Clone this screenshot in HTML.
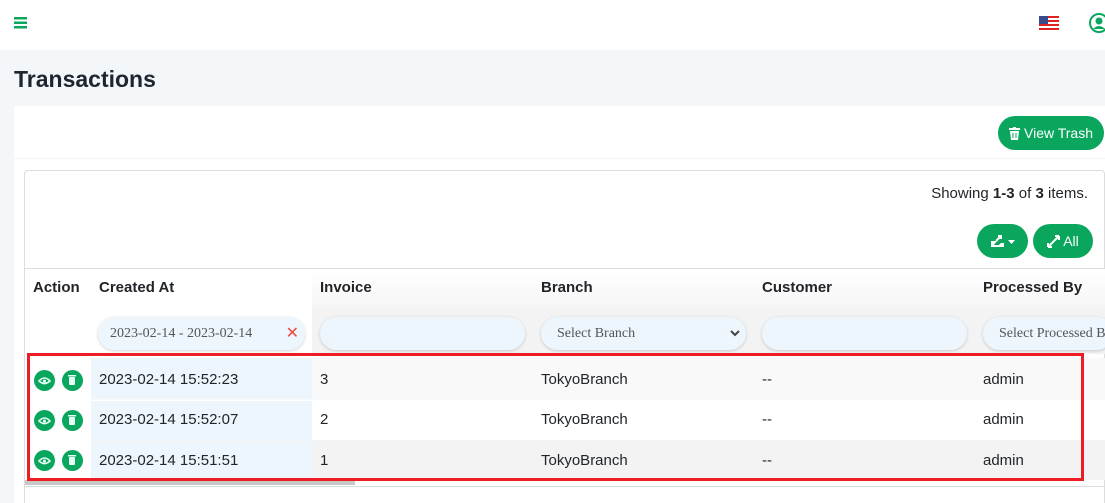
<!DOCTYPE html>
<html><head><meta charset="utf-8"><style>
*{box-sizing:border-box;margin:0;padding:0}
html,body{width:1105px;height:503px;overflow:hidden}
body{background:#f4f7fa;font-family:"Liberation Sans","DejaVu Sans",sans-serif;color:#212529;position:relative;font-size:15px}
.abs{position:absolute}
.top{left:0;top:0;width:1105px;height:50px;background:#fff}
.g{background:#0aa65e;color:#fff}
h1{position:absolute;left:14px;top:66px;font-size:23px;font-weight:bold;color:#1e2530}
.card{left:14px;top:106px;width:1091px;height:397px;background:#fff}
.panel{left:24px;top:170px;width:1081px;height:340px;border:1px solid #ddd;border-radius:4px;background:#fff}
.btn{border-radius:17px;color:#fff;font-size:14px;display:flex;align-items:center;justify-content:center}
.th{font-weight:bold;font-size:15px;top:279px}
.cell{font-size:15px}
.inp{height:33px;border-radius:17px;background:#eef6fd;box-shadow:0 1px 3px rgba(0,0,0,.18);font-family:"Liberation Serif",serif;font-size:14px;color:#555;padding-left:12px;line-height:33px;overflow:hidden;white-space:nowrap}
.ic{width:21px;height:21px;border-radius:50%;background:#0aa65e}
</style></head><body>
<div class="abs top"></div>
<svg class="abs" style="left:14px;top:17px" width="14" height="12"><rect y="0" width="13" height="2.5" fill="#0aa65e"/><rect y="4.5" width="13" height="2.5" fill="#0aa65e"/><rect y="9" width="13" height="2.5" fill="#0aa65e"/></svg>
<svg class="abs" style="left:1039px;top:16px" width="20" height="15"><rect width="20" height="15" fill="#fff"/><g fill="#d22"><rect y="0" width="20" height="2"/><rect y="4" width="20" height="2"/><rect y="8" width="20" height="2"/><rect y="12" width="20" height="2"/></g><rect width="9" height="8" fill="#3a4a8a"/></svg>
<svg class="abs" style="left:1088px;top:12px" width="20" height="22"><circle cx="11" cy="11" r="9" fill="none" stroke="#0aa65e" stroke-width="2"/><circle cx="11" cy="9" r="3.5" fill="#0aa65e"/><path d="M5 17 Q11 11 17 17" fill="#0aa65e"/></svg>
<h1>Transactions</h1>
<div class="abs card"></div>
<div class="abs" style="left:14px;top:158px;width:1091px;height:1px;background:#f2f4f6"></div>
<div class="abs btn g" style="left:998px;top:116px;width:106px;height:34px">
<svg width="11" height="13" style="margin-right:4px"><rect x="0" y="1" width="11" height="2" fill="#fff"/><rect x="4" y="0" width="3" height="2" fill="#fff"/><path d="M1 4h9l-1 9H2z" fill="#fff"/><g stroke="#0aa65e" stroke-width="1"><line x1="4" y1="6" x2="4" y2="11"/><line x1="7" y1="6" x2="7" y2="11"/></g></svg>View Trash</div>
<div class="abs panel"></div>
<div class="abs" style="right:17px;top:185px;font-size:15px">Showing <b>1-3</b> of <b>3</b> items.</div>
<div class="abs btn g" style="left:977px;top:224px;width:51px;height:34px">
<svg width="26" height="14"><path d="M1 13h13v-4h-3l-2 2H4l3-4H1z" fill="#fff"/><path d="M6 7l5-5M8 2h3v3" stroke="#fff" stroke-width="2" fill="none"/><path d="M18 6h7l-3.5 4z" fill="#fff"/></svg></div>
<div class="abs btn g" style="left:1033px;top:224px;width:60px;height:34px">
<svg width="13" height="13" style="margin-right:3px"><path d="M1 12l11-11M1 12v-4M1 12h4M12 1v4M12 1h-4" stroke="#fff" stroke-width="2" fill="none"/></svg>All</div>
<div class="abs" style="left:25px;top:268px;width:1080px;height:1px;background:#ddd"></div>
<div class="abs" style="left:312px;top:269px;width:793px;height:38px;background:linear-gradient(#fff,#f6f6f6)"></div>
<div class="abs" style="left:312px;top:307px;width:793px;height:47px;background:#f3f3f3"></div>
<div class="abs th" style="left:33px">Action</div>
<div class="abs th" style="left:99px">Created At</div>
<div class="abs th" style="left:320px">Invoice</div>
<div class="abs th" style="left:541px">Branch</div>
<div class="abs th" style="left:762px">Customer</div>
<div class="abs th" style="left:983px">Processed By</div>
<div class="abs inp" style="left:98px;top:317px;width:207px">2023-02-14 - 2023-02-14<span style="position:absolute;right:6px;color:#e74c3c;font-family:'Liberation Sans';font-size:16px">✕</span></div>
<div class="abs inp" style="left:320px;top:317px;width:205px"></div>
<div class="abs inp" style="left:541px;top:317px;width:205px;padding-left:16px">Select Branch<svg style="position:absolute;right:6px;top:13px" width="10" height="7"><path d="M1 1l4 4 4-4" stroke="#444" stroke-width="2" fill="none"/></svg></div>
<div class="abs inp" style="left:762px;top:317px;width:205px"></div>
<div class="abs inp" style="left:983px;top:317px;width:130px;padding-left:16px">Select Processed By</div>
<div class="abs" style="left:25px;top:358px;width:1080px;height:42px;background:#f9f9f9"></div>
<div class="abs" style="left:25px;top:400px;width:1080px;height:40px;background:#fff"></div>
<div class="abs" style="left:25px;top:440px;width:1080px;height:40px;background:#f3f3f3"></div>
<div class="abs" style="left:25px;top:358px;width:66px;height:122px;background:#fff"></div>
<div class="abs" style="left:91px;top:358px;width:221px;height:41px;background:#eef6fd"></div>
<div class="abs" style="left:91px;top:401px;width:221px;height:39px;background:#eef6fd"></div>
<div class="abs" style="left:91px;top:441px;width:221px;height:39px;background:#eef6fd"></div>
<div class="abs" style="left:25px;top:480px;width:330px;height:5px;background:#c8c8c8"></div>
<div class="abs" style="left:25px;top:486px;width:1080px;height:1px;background:#ddd"></div>
<div class="abs ic" style="left:34px;top:370px"></div><div class="abs ic" style="left:62px;top:370px"></div>
<div class="abs ic" style="left:34px;top:410px"></div><div class="abs ic" style="left:62px;top:410px"></div>
<div class="abs ic" style="left:34px;top:450px"></div><div class="abs ic" style="left:62px;top:450px"></div>
<svg class="abs" style="left:0;top:0" width="100" height="503">
<g fill="none" stroke="#e6fff2" stroke-width="1.6"><path d="M39 381q5.5-6 11 0q-5.5 5-11 0z"/><path d="M39 421q5.5-6 11 0q-5.5 5-11 0z"/><path d="M39 461q5.5-6 11 0q-5.5 5-11 0z"/></g>
<g fill="#e6fff2"><circle cx="44.5" cy="381" r="1.5"/><circle cx="44.5" cy="421" r="1.5"/><circle cx="44.5" cy="461" r="1.5"/></g>
<g fill="#e6fff2"><rect x="69" y="377" width="6" height="8" rx="1"/><rect x="68" y="375" width="8" height="1.5"/><rect x="69" y="417" width="6" height="8" rx="1"/><rect x="68" y="415" width="8" height="1.5"/><rect x="69" y="457" width="6" height="8" rx="1"/><rect x="68" y="455" width="8" height="1.5"/></g>
</svg>
<div class="abs cell" style="left:99px;top:371px">2023-02-14 15:52:23</div>
<div class="abs cell" style="left:320px;top:371px">3</div>
<div class="abs cell" style="left:541px;top:371px">TokyoBranch</div>
<div class="abs cell" style="left:762px;top:371px">--</div>
<div class="abs cell" style="left:983px;top:371px">admin</div>
<div class="abs cell" style="left:99px;top:411px">2023-02-14 15:52:07</div>
<div class="abs cell" style="left:320px;top:411px">2</div>
<div class="abs cell" style="left:541px;top:411px">TokyoBranch</div>
<div class="abs cell" style="left:762px;top:411px">--</div>
<div class="abs cell" style="left:983px;top:411px">admin</div>
<div class="abs cell" style="left:99px;top:452px">2023-02-14 15:51:51</div>
<div class="abs cell" style="left:320px;top:452px">1</div>
<div class="abs cell" style="left:541px;top:452px">TokyoBranch</div>
<div class="abs cell" style="left:762px;top:452px">--</div>
<div class="abs cell" style="left:983px;top:452px">admin</div>
<div class="abs" style="left:27px;top:353px;width:1057px;height:128px;border:3px solid #ee1c25"></div>
</body></html>
